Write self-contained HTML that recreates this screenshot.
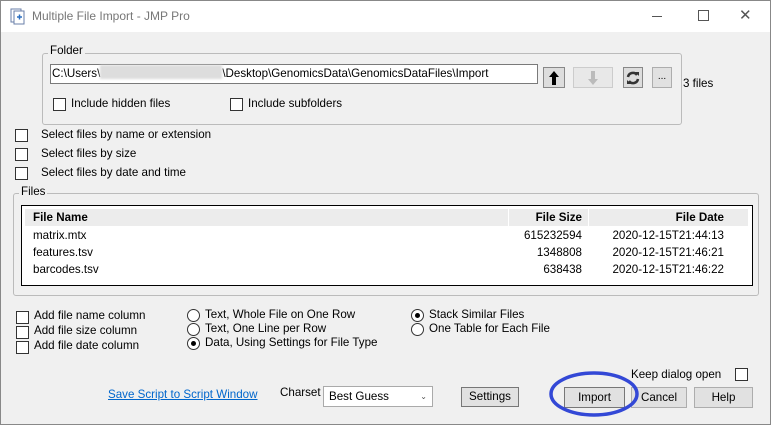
<!DOCTYPE html>
<html><head><style>
body{margin:0;width:771px;height:425px;overflow:hidden;font-family:"Liberation Sans",sans-serif;font-size:11.6px;color:#000;}
#w{position:absolute;left:0;top:0;width:769px;height:423px;border:1px solid #888;background:#f0f0f0;}
#t{position:absolute;left:0;top:0;width:769px;height:31px;background:#fff;}
.a{position:absolute;white-space:nowrap;}
.cb{position:absolute;width:11px;height:11px;border:1px solid #333;background:#fff;}
.rb{position:absolute;width:11px;height:11px;border:1px solid #333;border-radius:50%;background:#fff;}
.rb.on::after{content:"";position:absolute;left:3px;top:3px;width:5px;height:5px;border-radius:50%;background:#000;}
.grp{position:absolute;border:1px solid #bbb;border-radius:3px;}
.btn{position:absolute;background:#e1e1e1;border:1px solid #adadad;text-align:center;box-sizing:border-box;}
</style></head><body>
<div id="w">
<div id="t">
<svg class="a" style="left:8px;top:7px" width="16" height="17"><rect x="2" y="1" width="10" height="13" fill="#fff" stroke="#6a7fa8"/><rect x="5" y="3" width="10" height="13" fill="#fff" stroke="#6a7fa8"/><path d="M8 9h5M10.5 6.5v5" stroke="#2a6ec0" stroke-width="1.5"/></svg>
<div class="a" style="left:31px;top:8px;color:#777;font-size:12px">Multiple File Import - JMP Pro</div>
<div class="a" style="left:651px;top:15px;width:10px;height:1px;background:#555"></div>
<div class="a" style="left:697px;top:9px;width:9px;height:9px;border:1px solid #555"></div>
<div class="a" style="left:738px;top:5px;font-size:15px;color:#555">✕</div>
</div>
<div class="grp" style="left:41px;top:52px;width:638px;height:70px"></div>
<div class="a" style="left:47px;top:43px;background:#f0f0f0;padding:0 2px">Folder</div>
<div class="a" style="left:49px;top:63px;width:485px;height:18px;background:#fff;border:1px solid #7a7a7a;line-height:18px;padding-left:1px;box-sizing:content-box">C:\Users\<span style="display:inline-block;width:122px;height:14px;background:#ddd;vertical-align:-2px;filter:blur(1px)"></span>\Desktop\GenomicsData\GenomicsDataFiles\Import</div>
<div class="btn" style="left:542px;top:66px;width:22px;height:21px;background:#ddd;border-color:#888"><svg width="12" height="16" style="margin-top:2px"><path d="M6 1L1 7h3v8h4V7h3z" fill="#000"/></svg></div>
<div class="btn" style="left:572px;top:66px;width:40px;height:21px;background:#e8e8e8;border-color:#ccc"><svg width="12" height="16" style="margin-top:2px"><path d="M6 15L1 9h3V1h4v8h3z" fill="#bbb"/></svg></div>
<div class="btn" style="left:622px;top:66px;width:20px;height:21px;background:#ddd;border-color:#888"><svg width="16" height="16" style="margin-top:2px"><path d="M3 7a5 5 0 0 1 9-2M13 9a5 5 0 0 1-9 2" stroke="#333" stroke-width="2.5" fill="none"/><path d="M10 2l4 0l0 4z M6 14l-4 0l0-4z" fill="#333"/></svg></div>
<div class="btn" style="left:651px;top:66px;width:20px;height:21px;line-height:17px;font-size:10px">...</div>
<div class="a" style="left:682px;top:76px">3 files</div>
<div class="cb" style="left:52px;top:97px"></div><div class="a" style="left:70px;top:96px">Include hidden files</div>
<div class="cb" style="left:229px;top:97px"></div><div class="a" style="left:247px;top:96px">Include subfolders</div>
<div class="cb" style="left:14px;top:128px"></div><div class="a" style="left:40px;top:127px">Select files by name or extension</div>
<div class="cb" style="left:14px;top:147px"></div><div class="a" style="left:40px;top:146px">Select files by size</div>
<div class="cb" style="left:14px;top:166px"></div><div class="a" style="left:40px;top:165px">Select files by date and time</div>
<div class="grp" style="left:12px;top:192px;width:744px;height:101px"></div>
<div class="a" style="left:18px;top:184px;background:#f0f0f0;padding:0 2px">Files</div>
<div class="a" style="left:20px;top:204px;width:730px;height:79px;background:#fff;border:1px solid #000"></div>
<div class="a" style="left:24px;top:208px;width:723px;height:17px;background:#ececec"></div>
<div class="a" style="left:507px;top:208px;width:1px;height:17px;background:#fff"></div>
<div class="a" style="left:587px;top:208px;width:1px;height:17px;background:#fff"></div>
<div class="a" style="left:32px;top:210px;font-weight:bold">File Name</div>
<div class="a" style="left:481px;width:100px;text-align:right;top:210px;font-weight:bold">File Size</div>
<div class="a" style="left:623px;width:100px;text-align:right;top:210px;font-weight:bold">File Date</div>
<div class="a" style="left:32px;top:228px">matrix.mtx</div><div class="a" style="left:481px;width:100px;text-align:right;top:228px">615232594</div><div class="a" style="left:603px;width:120px;text-align:right;top:228px">2020-12-15T21:44:13</div>
<div class="a" style="left:32px;top:245px">features.tsv</div><div class="a" style="left:481px;width:100px;text-align:right;top:245px">1348808</div><div class="a" style="left:603px;width:120px;text-align:right;top:245px">2020-12-15T21:46:21</div>
<div class="a" style="left:32px;top:262px">barcodes.tsv</div><div class="a" style="left:481px;width:100px;text-align:right;top:262px">638438</div><div class="a" style="left:603px;width:120px;text-align:right;top:262px">2020-12-15T21:46:22</div>
<div class="cb" style="left:15px;top:310px"></div><div class="a" style="left:33px;top:308px">Add file name column</div>
<div class="cb" style="left:15px;top:325px"></div><div class="a" style="left:33px;top:323px">Add file size column</div>
<div class="cb" style="left:15px;top:340px"></div><div class="a" style="left:33px;top:338px">Add file date column</div>
<div class="rb" style="left:186px;top:308px"></div><div class="a" style="left:204px;top:307px">Text, Whole File on One Row</div>
<div class="rb" style="left:186px;top:322px"></div><div class="a" style="left:204px;top:321px">Text, One Line per Row</div>
<div class="rb on" style="left:186px;top:336px"></div><div class="a" style="left:204px;top:335px">Data, Using Settings for File Type</div>
<div class="rb on" style="left:410px;top:308px"></div><div class="a" style="left:428px;top:307px">Stack Similar Files</div>
<div class="rb" style="left:410px;top:322px"></div><div class="a" style="left:428px;top:321px">One Table for Each File</div>
<div class="a" style="left:630px;top:367px">Keep dialog open</div>
<div class="cb" style="left:734px;top:367px"></div>
<div class="a" style="left:107px;top:387px;color:#0066cc;text-decoration:underline">Save Script to Script Window</div>
<div class="a" style="left:279px;top:385px">Charset</div>
<div class="a" style="left:322px;top:385px;width:110px;height:21px;background:#fff;border:1px solid #aaa;box-sizing:border-box;line-height:20px;padding-left:5px">Best Guess<span style="position:absolute;right:5px;font-size:8px;color:#555">&#8964;</span></div>
<div class="btn" style="left:460px;top:386px;width:58px;height:20px;line-height:18px;border-color:#777">Settings</div>
<div class="btn" style="left:563px;top:386px;width:61px;height:21px;line-height:19px;border-color:#777">Import</div>
<div class="btn" style="left:630px;top:386px;width:56px;height:21px;line-height:19px">Cancel</div>
<div class="btn" style="left:693px;top:386px;width:59px;height:21px;line-height:19px">Help</div>
<svg class="a" style="left:546px;top:369px" width="94" height="48"><ellipse cx="47" cy="24" rx="43" ry="21" fill="none" stroke="#3348d6" stroke-width="3.5"/></svg>
</div>
</body></html>
